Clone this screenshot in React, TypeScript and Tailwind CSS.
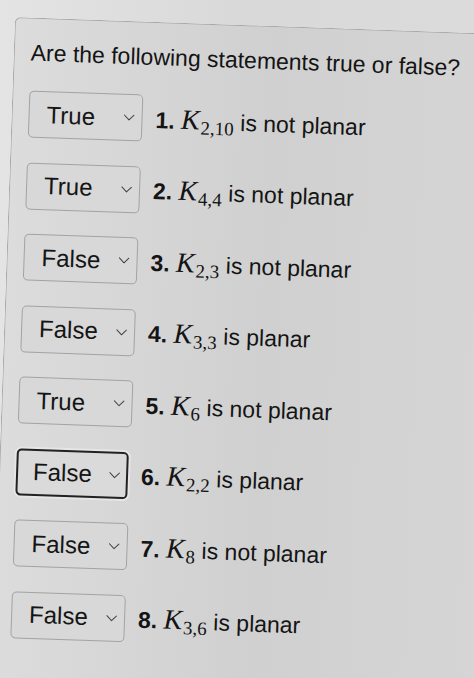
import { ChevronDown } from "lucide-react";

type Row = {
  value: string;
  n: number;
  sub: string;
  rest: string;
  focused?: boolean;
};

const rows: Row[] = [
  { value: "True", n: 1, sub: "2,10", rest: "is not planar" },
  { value: "True", n: 2, sub: "4,4", rest: "is not planar" },
  { value: "False", n: 3, sub: "2,3", rest: "is not planar" },
  { value: "False", n: 4, sub: "3,3", rest: "is planar" },
  { value: "True", n: 5, sub: "6", rest: "is not planar" },
  { value: "False", n: 6, sub: "2,2", rest: "is planar", focused: true },
  { value: "False", n: 7, sub: "8", rest: "is not planar" },
  { value: "False", n: 8, sub: "3,6", rest: "is planar" },
];

function Select({ value, focused }: { value: string; focused?: boolean }) {
  return (
    <div
      className={
        focused
          ? "w-[112px] h-[47px] shrink-0 flex items-center justify-between pl-[15px] pr-[2px] rounded-[5px] bg-[#dadada] border-2 border-[#222] shadow-[0_0_0_2px_#e6e6e6]"
          : "w-[114px] h-[47px] shrink-0 flex items-center justify-between pl-[17px] pr-[3px] rounded-[5px] bg-[#d8d8d8] border border-[#a3a3a3]"
      }
    >
      <span className="text-[24px] text-[#151515] leading-none">{value}</span>
      <ChevronDown className="w-[19px] h-[19px] text-[#444]" strokeWidth={1.3} />
    </div>
  );
}

export default function App() {
  return (
    <div className="w-[474px] h-[678px] overflow-hidden bg-gradient-to-r from-[#e4e4e4] via-[#d9d9d9] to-[#dbdbdb] font-['Liberation_Sans',Arial,sans-serif] text-[#141414]">
      {/* Question panel, photographed at a slight tilt */}
      <div className="ml-[15px] mt-[17px] w-[520px] h-[720px] origin-top-left rotate-[2deg] rounded-tl-[6px] border-t border-l border-[#a8a8a8] bg-gradient-to-r from-[#dcdcdc] via-[#d0d0d0] to-[#d6d6d6] px-4 pt-[21px]">
        <h2 className="text-[23px] leading-[26px]">Are the following statements true or false?</h2>

        <div className="mt-[25px] flex flex-col gap-[24.5px]">
          {rows.map((r) => (
            <div key={r.n} className="flex items-center">
              <Select value={r.value} focused={r.focused} />
              <div className="ml-[13px] text-[23px] whitespace-nowrap">
                <span className="font-bold">{r.n}.</span>{" "}
                <span className="font-['Liberation_Serif',serif] italic text-[28px]">K</span>
                <span className="font-['Liberation_Serif',serif] text-[19px] relative top-[5px] ml-[1px]">
                  {r.sub}
                </span>{" "}
                <span>{r.rest}</span>
              </div>
            </div>
          ))}
        </div>
      </div>
    </div>
  );
}
